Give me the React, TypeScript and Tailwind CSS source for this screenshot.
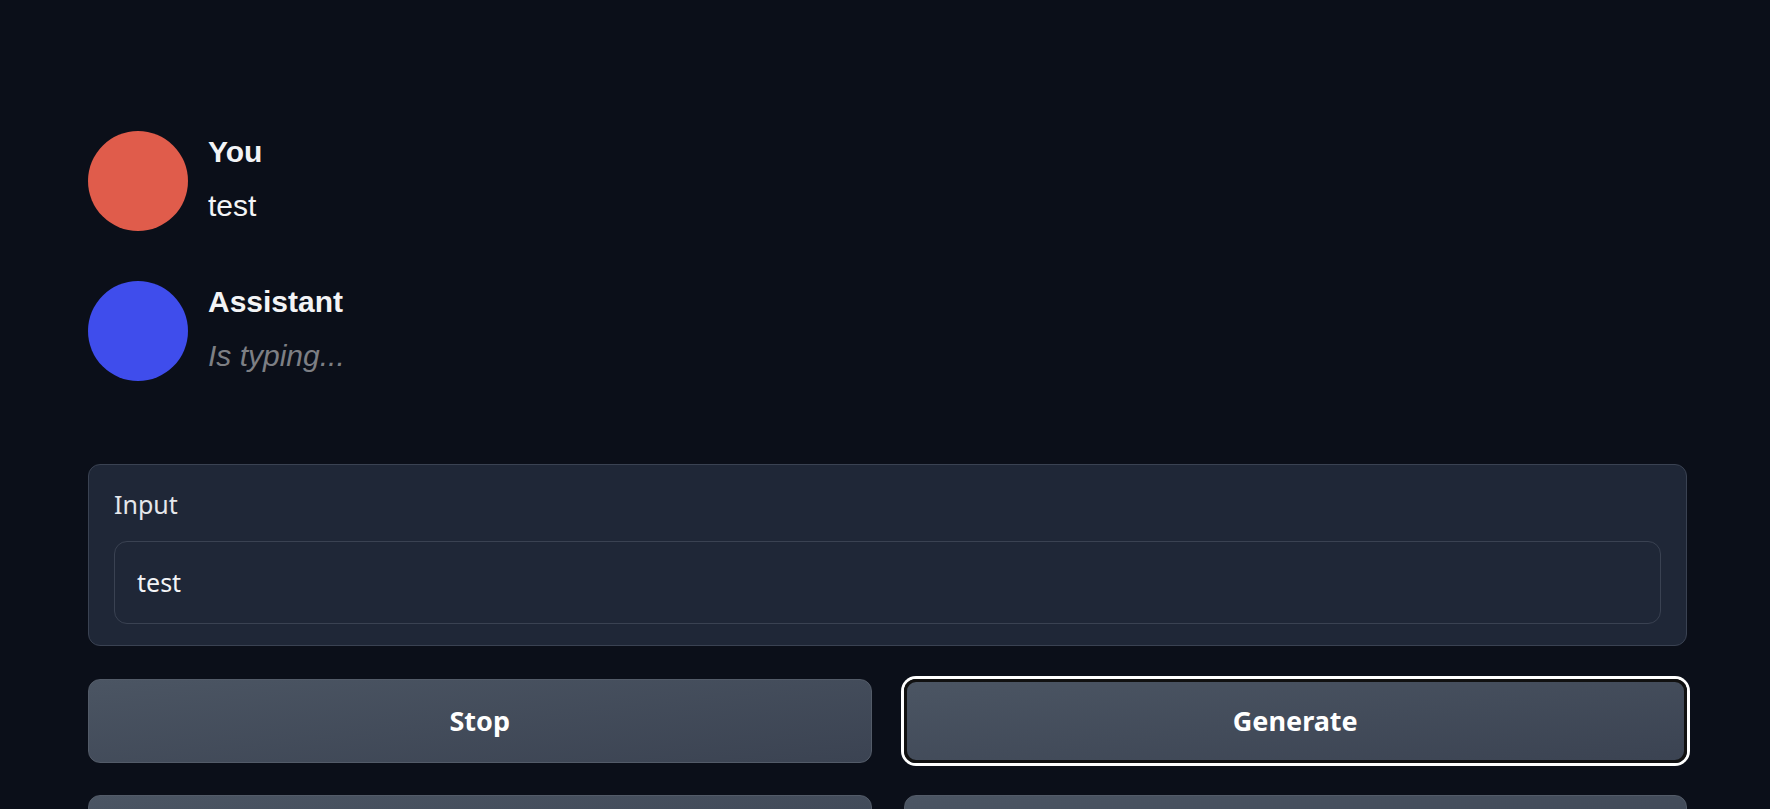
import React from 'react';

const App = () => {
  const messages = [
    { name: "You", text: "test", color: "bg-[#e05c4b]", typing: false },
    { name: "Assistant", text: "Is typing...", color: "bg-[#3f4dec]", typing: true }
  ];

  const buttons = [
    { label: "Stop", focused: false },
    { label: "Generate", focused: true },
    { label: "", focused: false },
    { label: "", focused: false }
  ];

  return (
    <div className="min-h-screen bg-[#0b0f19] pl-[88px] pr-[83px] pt-[131px] pb-10 overflow-hidden">
      {/* Chat history */}
      <div className="flex flex-col gap-[50px]">
        {messages.map((msg, index) => (
          <div key={index} className="flex items-start gap-5">
            <div className={`w-[100px] h-[100px] rounded-full flex-shrink-0 ${msg.color}`}></div>
            <div className="pt-px font-['Liberation_Sans',Arial,sans-serif] text-[30px] leading-[40px]">
              <div className="font-bold text-[#f3f4f6]">{msg.name}</div>
              <div className={`mt-[14px] ${msg.typing ? 'italic text-[#7d7f84]' : 'text-[#f3f4f6]'}`}>
                {msg.text}
              </div>
            </div>
          </div>
        ))}
      </div>

      {/* Input block */}
      <div className="mt-[83px] bg-[#1f2737] border border-[#3a4252] rounded-[12px] px-[25px] pt-[22px] pb-[21px] font-['Noto_Sans',sans-serif]">
        <div className="text-[25px] leading-[34px] text-[#e5e7eb] mb-[20px]">Input</div>
        <div className="h-[83px] border border-[#3a4252] rounded-[13px] bg-[#1f2737] px-[22px] flex items-center">
          <span className="text-[25px] text-[#f3f4f6]">test</span>
        </div>
      </div>

      {/* Action buttons */}
      <div className="mt-[33px] grid grid-cols-2 gap-x-8 gap-y-8 font-['Noto_Sans',sans-serif]">
        {buttons.map((btn, index) => (
          <button
            key={index}
            className={`h-[84px] rounded-[12px] bg-gradient-to-br from-[#4b5563] to-[#3b4352] text-[27px] font-bold text-white ${
              btn.focused
                ? 'border-[3px] border-[#111111] ring-[3px] ring-white'
                : 'border border-[#535b68]'
            }`}
          >
            {btn.label}
          </button>
        ))}
      </div>
    </div>
  );
};

export default App;
